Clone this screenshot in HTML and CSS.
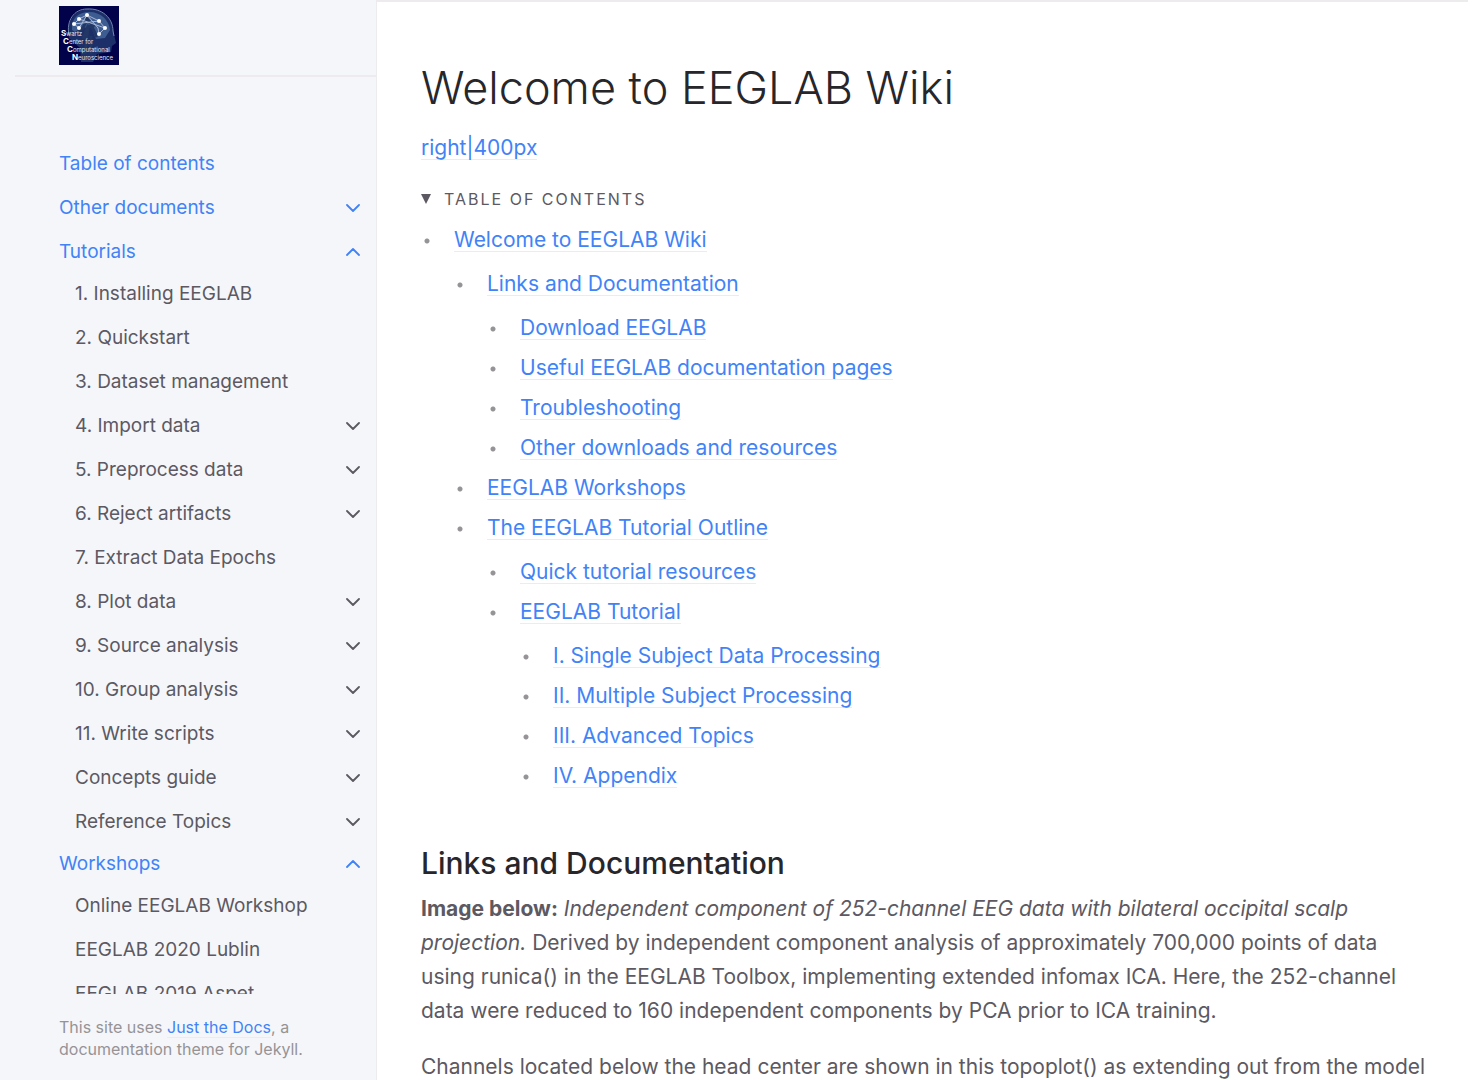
FILE: index.html
```html
<!DOCTYPE html>
<html lang="en">
<head>
  <meta charset="UTF-8">
  <meta name="viewport" content="width=device-width, initial-scale=1">
  <title>EEGLAB Wiki</title>
  <link rel="stylesheet" href="styles.css">
</head>
<body>

  <!-- shared icons -->
  <svg class="sprite" aria-hidden="true">
    <symbol id="chevron" viewBox="0 0 14 8">
      <path d="M1 1l6 6 6-6" fill="none" stroke="currentColor" stroke-width="1.8" stroke-linecap="round" stroke-linejoin="round"/>
    </symbol>
  </svg>

  <div class="layout">
    <aside class="sidebar">
      <header class="site-header">
        <a href="#" class="site-logo" aria-label="EEGLAB Wiki">
          <svg viewBox="0 0 60 59">
            <rect width="60" height="59" fill="#02024a"/>
            <path d="M10 32C7 18 14 4 29 3c14-1 24 9 25 21l3 13-4 3-1 6-14 2-4 8H22l-1-14z" fill="#1c2f68"/>
            <path d="M13 24C12 12 20 6 30 6c12 0 20 8 21 18l-5 8-9 1-5-12-10 1-3 6z" fill="#3d5c91"/>
            <path d="M10 29C7 15 15 3 28 3c15-1 26 9 26 22l1 5" fill="none" stroke="#7186b0" stroke-width="1"/>
            <path d="M24 33l5-13 4 1 5 10M29 21l-3 27M32 30v18M17 27l7-5 4-9 7 8" fill="none" stroke="#233765" stroke-width="3"/>
            <path d="M15 18l5-5 8-4 12 6 6 7-6 6-1-6-11-13-8 13zM15 18l25-3M20 13l26 9" fill="none" stroke="#a9b9d7" stroke-width="1"/>
            <g fill="#fff">
              <circle cx="15" cy="18" r="2"/>
              <circle cx="20" cy="13" r="2"/>
              <circle cx="28" cy="9" r="2"/>
              <circle cx="40" cy="15" r="2"/>
              <circle cx="46" cy="22" r="2"/>
              <circle cx="40" cy="28" r="2"/>
              <circle cx="20" cy="22" r="2"/>
            </g>
            <g class="logo-text">
              <text x="2" y="30"><tspan class="logo-cap">S</tspan>wartz</text>
              <text x="4" y="38"><tspan class="logo-cap">C</tspan>enter for</text>
              <text x="8" y="46"><tspan class="logo-cap">C</tspan>omputational</text>
              <text x="13" y="54"><tspan class="logo-cap">N</tspan>euroscience</text>
            </g>
          </svg>
        </a>
      </header>

      <nav class="site-nav" aria-label="Main">
        <ul class="nav-list">
          <li><div class="nav-row"><a href="#">Table of contents</a></div></li>
          <li><div class="nav-row"><a href="#">Other documents</a><button class="nav-toggle" aria-label="Toggle Other documents"><svg><use href="#chevron"/></svg></button></div></li>
          <li>
            <div class="nav-row"><a href="#">Tutorials</a><button class="nav-toggle open" aria-label="Toggle Tutorials"><svg><use href="#chevron"/></svg></button></div>
            <ul class="nav-sub">
              <li class="nav-row"><a href="#">1. Installing EEGLAB</a></li>
              <li class="nav-row"><a href="#">2. Quickstart</a></li>
              <li class="nav-row"><a href="#">3. Dataset management</a></li>
              <li class="nav-row"><a href="#">4. Import data</a><button class="nav-toggle" aria-label="Toggle Import data"><svg><use href="#chevron"/></svg></button></li>
              <li class="nav-row"><a href="#">5. Preprocess data</a><button class="nav-toggle" aria-label="Toggle Preprocess data"><svg><use href="#chevron"/></svg></button></li>
              <li class="nav-row"><a href="#">6. Reject artifacts</a><button class="nav-toggle" aria-label="Toggle Reject artifacts"><svg><use href="#chevron"/></svg></button></li>
              <li class="nav-row"><a href="#">7. Extract Data Epochs</a></li>
              <li class="nav-row"><a href="#">8. Plot data</a><button class="nav-toggle" aria-label="Toggle Plot data"><svg><use href="#chevron"/></svg></button></li>
              <li class="nav-row"><a href="#">9. Source analysis</a><button class="nav-toggle" aria-label="Toggle Source analysis"><svg><use href="#chevron"/></svg></button></li>
              <li class="nav-row"><a href="#">10. Group analysis</a><button class="nav-toggle" aria-label="Toggle Group analysis"><svg><use href="#chevron"/></svg></button></li>
              <li class="nav-row"><a href="#">11. Write scripts</a><button class="nav-toggle" aria-label="Toggle Write scripts"><svg><use href="#chevron"/></svg></button></li>
              <li class="nav-row"><a href="#">Concepts guide</a><button class="nav-toggle" aria-label="Toggle Concepts guide"><svg><use href="#chevron"/></svg></button></li>
              <li class="nav-row"><a href="#">Reference Topics</a><button class="nav-toggle" aria-label="Toggle Reference Topics"><svg><use href="#chevron"/></svg></button></li>
            </ul>
          </li>
          <li>
            <div class="nav-row"><a href="#">Workshops</a><button class="nav-toggle open" aria-label="Toggle Workshops"><svg><use href="#chevron"/></svg></button></div>
            <ul class="nav-sub">
              <li class="nav-row"><a href="#">Online EEGLAB Workshop</a></li>
              <li class="nav-row"><a href="#">EEGLAB 2020 Lublin</a></li>
              <li class="nav-row"><a href="#">EEGLAB 2019 Aspet</a></li>
            </ul>
          </li>
        </ul>
      </nav>

      <footer class="site-footer">
        This site uses <a href="#">Just the Docs</a>, a documentation theme for Jekyll.
      </footer>
    </aside>

    <main class="main">
      <h1>Welcome to EEGLAB Wiki</h1>
      <p><a href="#">right|400px</a></p>

      <details class="toc" open>
        <summary>
          <svg class="toc-arrow" viewBox="0 0 10 10" aria-hidden="true"><path d="M0 0h10L5 10z" fill="currentColor"/></svg>
          Table of contents
        </summary>
        <ul>
          <li><a href="#">Welcome to EEGLAB Wiki</a>
            <ul>
              <li><a href="#links">Links and Documentation</a>
                <ul>
                  <li><a href="#">Download EEGLAB</a></li>
                  <li><a href="#">Useful EEGLAB documentation pages</a></li>
                  <li><a href="#">Troubleshooting</a></li>
                  <li><a href="#">Other downloads and resources</a></li>
                </ul>
              </li>
              <li><a href="#">EEGLAB Workshops</a></li>
              <li><a href="#">The EEGLAB Tutorial Outline</a>
                <ul>
                  <li><a href="#">Quick tutorial resources</a></li>
                  <li><a href="#">EEGLAB Tutorial</a>
                    <ul>
                      <li><a href="#">I. Single Subject Data Processing</a></li>
                      <li><a href="#">II. Multiple Subject Processing</a></li>
                      <li><a href="#">III. Advanced Topics</a></li>
                      <li><a href="#">IV. Appendix</a></li>
                    </ul>
                  </li>
                </ul>
              </li>
            </ul>
          </li>
        </ul>
      </details>

      <h2 id="links">Links and Documentation</h2>
      <p><strong>Image below:</strong> <em>Independent component of 252-channel EEG data with bilateral occipital scalp projection.</em> Derived by independent component analysis of approximately 700,000 points of data using runica() in the EEGLAB Toolbox, implementing extended infomax ICA. Here, the 252-channel data were reduced to 160 independent components by PCA prior to ICA training.</p>
      <p>Channels located below the head center are shown in this topoplot() as extending out from the model</p>
    </main>
  </div>

</body>
</html>
```

FILE: styles.css
```css
* {
  box-sizing: border-box;
}

body {
  margin: 0;
  font-family: Inter, "Liberation Sans", sans-serif;
  font-size: 21px;
  line-height: 34px;
  color: #5c5962;
  background: #fff;
}

a {
  color: #4183f7;
  text-decoration: none;
}

ul {
  margin: 0;
  padding: 0;
  list-style: none;
}

.sprite {
  display: none;
}

.layout {
  display: flex;
  height: 100vh;
  overflow: hidden;
}

/* sidebar */
.sidebar {
  display: flex;
  flex-direction: column;
  flex: none;
  width: 377px;
  background: #f5f6fa;
  border-right: 1px solid #eeebee;
}

.site-header {
  flex: none;
  margin-left: 15px;
  padding: 6px 0 10px 44px;
  border-bottom: 2px solid #eeebee;
}

.site-logo,
.site-logo svg {
  display: block;
  width: 60px;
  height: 59px;
}

.logo-text {
  fill: #e3e7f2;
  font-size: 6px;
}

.logo-cap {
  fill: #fff;
  font-size: 8px;
  font-weight: 700;
}

.site-nav {
  flex: 1;
  min-height: 0;
  padding-top: 65px;
  overflow: hidden;
  font-size: 19px;
}

.nav-row {
  display: flex;
  align-items: center;
  justify-content: space-between;
  height: 44px;
  padding: 0 16px 0 59px;
}

.nav-sub {
  margin: -2px 0;
}

.nav-sub .nav-row {
  padding-left: 75px;
}

.nav-sub a,
.nav-sub .nav-toggle {
  color: #5c5962;
}

.nav-toggle {
  display: flex;
  padding: 0;
  border: 0;
  background: none;
  color: #4183f7;
  cursor: pointer;
}

.nav-toggle svg {
  width: 14px;
  height: 8px;
}

.nav-toggle.open svg {
  transform: rotate(180deg);
}

.site-footer {
  flex: none;
  padding: 22px 44px 20px 59px;
  font-size: 16px;
  line-height: 22px;
  color: #959396;
}

/* content */
.main {
  flex: 1;
  min-width: 0;
  margin-right: 5px;
  padding: 56px 36px 0 44px;
  border-top: 2px solid #eeebee;
}

.main a,
.site-footer a {
  border-bottom: 1px solid #eeebee;
}

.main a {
  display: inline-block;
  line-height: 22px;
}

h1 {
  margin: 0;
  font-size: 45px;
  font-weight: 300;
  line-height: 60px;
  color: #27262b;
}

h2 {
  margin: 50px 0 9px;
  font-size: 30px;
  font-weight: 500;
  line-height: 40px;
  color: #27262b;
}

p {
  margin: 0 0 22px;
}

h1 + p {
  margin: 13px 0 17px;
}

.toc summary {
  display: flex;
  align-items: center;
  gap: 13px;
  font-size: 16px;
  letter-spacing: 2px;
  text-transform: uppercase;
  list-style: none;
  cursor: pointer;
}

.toc-arrow {
  width: 10px;
  height: 10px;
}

.toc ul {
  margin-top: 10px;
}

.toc > ul {
  margin-top: 7px;
}

.toc li {
  margin: 6px 0;
  padding-left: 33px;
  background: radial-gradient(circle at 6px 18px, #959396 2px, transparent 3px) no-repeat;
}
```
